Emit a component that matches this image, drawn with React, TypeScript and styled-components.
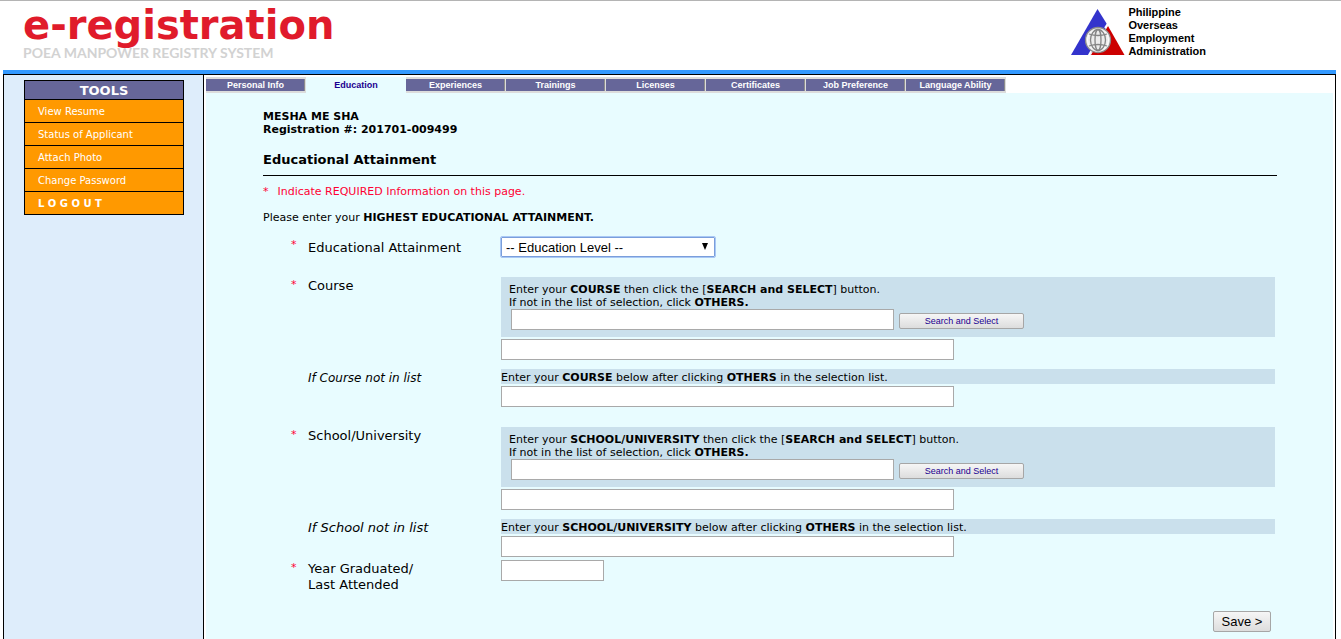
import React from "react";
import styled, { createGlobalStyle } from "styled-components";

const verdana = `Verdana, "DejaVu Sans", sans-serif`;
const arial = `"Liberation Sans", Arial, sans-serif`;

const GlobalStyle = createGlobalStyle`
  *, *::before, *::after { box-sizing: border-box; }
  body { margin: 0; background: #fff; color: #000; font: 11px/13px ${verdana}; }
`;

const Page = styled.div`
  display: flex;
  flex-direction: column;
  min-height: 100vh;
  padding: 0 5px 0 3px;
  border-top: 1px solid #b4b4b4;
`;

const Header = styled.header`
  display: flex;
  justify-content: space-between;
  align-items: flex-start;
  height: 69px;
  padding: 5px 130px 0 20px;
`;

const Brand = styled.div`
  display: flex;
  flex-direction: column;
`;

const BrandName = styled.h1`
  margin: 0;
  font: bold 40px/38px "DejaVu Sans", sans-serif;
  color: #e01b2b;
`;

const BrandTagline = styled.p`
  margin: 0;
  font: bold 14px/18px Lato, sans-serif;
  color: #d2d2d2;
`;

const Agency = styled.div`
  display: flex;
  align-items: center;
  gap: 3px;
`;

const AgencyName = styled.p`
  margin: 0;
  font: bold 11px/13px ${arial};
`;

const Frame = styled.div`
  display: flex;
  flex: 1;
  border-top: 4px solid #3399ff;
`;

const Sidebar = styled.aside`
  flex: none;
  width: 201px;
  padding: 5px 19px 0 20px;
  border: 1px solid #000;
  border-bottom: 0;
  background: #deedfb;
`;

const Tools = styled.nav`
  border: 1px solid #000;
  background: #ff9900;
`;

const ToolsTitle = styled.h2`
  margin: 0;
  padding-top: 2px;
  background: #666699;
  color: #fff;
  font-size: 13px;
  line-height: 16px;
  text-align: center;
`;

const ToolLink = styled.a<{ $strong?: boolean }>`
  display: block;
  padding: 2px 0 0 13px;
  border-top: 1px solid #000;
  color: #fff;
  font-size: 10px;
  font-weight: ${(p) => (p.$strong ? "bold" : "normal")};
  line-height: 20px;
  text-decoration: none;
`;

const Main = styled.main`
  display: flex;
  flex: 1;
  flex-direction: column;
  padding: 2px 2px 0;
  border: solid #000;
  border-width: 1px 1px 0 0;
`;

const Tabs = styled.nav`
  display: flex;
`;

const Tab = styled.a<{ $active?: boolean }>`
  width: 100px;
  height: 16px;
  padding: ${(p) => (p.$active ? "2px 0" : "0")};
  border: solid ${(p) => (p.$active ? "#e8fcff" : "#dcdcdc")};
  border-width: ${(p) => (p.$active ? "0" : "2px 1px 2px 0")};
  background: ${(p) => (p.$active ? "#e8fcff" : "#666699")};
  box-shadow: ${(p) => (p.$active ? "none" : "inset -1px 0 #8c8c8c")};
  color: ${(p) => (p.$active ? "#1a0090" : "#fff")};
  font: bold 9px/12px ${arial};
  text-align: center;
  text-decoration: none;
`;

const Content = styled.div`
  flex: 1;
  padding: 17px 56px 7px 57px;
  background: #e8fcff;
`;

const Applicant = styled.p`
  margin: 0 0 16px;
  font-weight: bold;
`;

const Heading = styled.h2`
  margin: 0 0 9px;
  padding-bottom: 7px;
  border-bottom: 1px solid #000;
  font-size: 13px;
  line-height: 16px;
`;

const RequiredNote = styled.p`
  display: flex;
  gap: 9px;
  margin: 0 0 13px;
  color: #ff0033;
`;

const Lead = styled.p`
  margin: 0 0 13px;
`;

const Row = styled.div<{ $gap?: number; $middle?: boolean }>`
  display: grid;
  grid-template-columns: 45px 193px 1fr;
  align-items: ${(p) => (p.$middle ? "center" : "start")};
  margin-bottom: ${(p) => p.$gap ?? 0}px;
  padding-right: 2px;
`;

const Star = styled.span`
  align-self: start;
  padding: 1px 0 0 28px;
  color: #ff0033;
`;

const Label = styled.label<{ $note?: boolean; $size?: number }>`
  grid-column: 2;
  padding-top: 1px;
  font-size: ${(p) => p.$size ?? 13}px;
  font-style: ${(p) => (p.$note ? "italic" : "normal")};
  line-height: 16px;
`;

const Field = styled.div`
  grid-column: 3;
  display: flex;
  flex-direction: column;
  align-items: flex-start;
  gap: 2px;
`;

const SelectBox = styled.div`
  position: relative;
  width: 214px;
`;

const Select = styled.select`
  appearance: none;
  display: block;
  width: 100%;
  height: 20px;
  padding: 1px 4px 0;
  border: 1px solid #7a9edb;
  border-radius: 1px;
  outline: 1px solid #a9c8f5;
  background: #fff;
  color: #000;
  font: 13px/17px ${arial};
`;

const Arrow = styled.svg`
  position: absolute;
  top: 6px;
  right: 6px;
  pointer-events: none;
`;

const TextInput = styled.input<{ $width: number }>`
  width: ${(p) => p.$width}px;
  height: 21px;
  padding: 0 2px;
  border: 1px solid #a9a9a9;
  border-radius: 0;
  background: #fff;
  font: 13px ${arial};
`;

const Panel = styled.div`
  width: 100%;
  padding: 6px 8px 7px;
  background: #cae0ec;
`;

const PanelText = styled.p`
  margin: 0;
`;

const SearchLine = styled.div`
  display: flex;
  align-items: flex-end;
  gap: 5px;
  padding-left: 2px;
`;

const Strip = styled.p`
  width: 100%;
  margin: 0;
  padding-top: 2px;
  background: #cae0ec;
`;

const Button = styled.button<{ $small?: boolean }>`
  width: ${(p) => (p.$small ? 125 : 58)}px;
  height: ${(p) => (p.$small ? 16 : 21)}px;
  margin-bottom: ${(p) => (p.$small ? 1 : 0)}px;
  padding: 0;
  border: 1px solid #a6a6a6;
  border-radius: 2px;
  background: linear-gradient(#f6f6f6, #dddddd);
  color: ${(p) => (p.$small ? "#1a0090" : "#000")};
  font: ${(p) => (p.$small ? "9px/12px" : "13px/18px")} ${arial};
`;

const Actions = styled.div`
  display: flex;
  justify-content: flex-end;
  margin-top: 18px;
  padding-right: 6px;
`;

const tools = ["View Resume", "Status of Applicant", "Attach Photo", "Change Password"];

const tabs = [
  "Personal Info",
  "Education",
  "Experiences",
  "Trainings",
  "Licenses",
  "Certificates",
  "Job Preference",
  "Language Ability",
];

function AgencyLogo() {
  return (
    <svg width="54" height="48" viewBox="0 0 54 48" aria-hidden="true">
      <path d="M26.500 1 L36.500 17 L19 47 H0 Z" fill="#3333cc" />
      <path d="M37 18 L53.500 47 H20 L24 40 Z" fill="#cc0000" />
      <path d="M38 14 L34 20 M22 40 L17.500 48" stroke="#fff" strokeWidth="2" />
      <circle cx="27" cy="32" r="12.500" fill="#ececec" stroke="#8a8a8a" strokeWidth="1.300" />
      <circle cx="27" cy="32" r="10.500" fill="none" stroke="#fff" strokeWidth="1" />
      <g fill="none" stroke="#858585" strokeWidth="1.300">
        <ellipse cx="27" cy="32" rx="7.500" ry="10.500" />
        <ellipse cx="27" cy="32" rx="3" ry="10.500" />
        <path d="M18 26 Q27 29 36 26 M18 38 Q27 35 36 38" />
      </g>
    </svg>
  );
}

interface LookupProps {
  id: string;
  label: string;
  subject: string;
  otherLabel: string;
  otherSize: number;
  otherGap: number;
}

function Lookup({ id, label, subject, otherLabel, otherSize, otherGap }: LookupProps) {
  return (
    <>
      <Row $gap={9}>
        <Star>*</Star>
        <Label htmlFor={id}>{label}</Label>
        <Field>
          <Panel>
            <PanelText>
              Enter your <b>{subject}</b> then click the [<b>SEARCH and SELECT</b>] button.
              <br />
              If not in the list of selection, click <b>OTHERS.</b>
            </PanelText>
            <SearchLine>
              <TextInput id={id} $width={383} />
              <Button type="button" $small>
                Search and Select
              </Button>
            </SearchLine>
          </Panel>
          <TextInput aria-label={`Selected ${label}`} $width={453} readOnly />
        </Field>
      </Row>
      <Row $gap={otherGap}>
        <Label htmlFor={`${id}-other`} $note $size={otherSize}>
          {otherLabel}
        </Label>
        <Field>
          <Strip>
            Enter your <b>{subject}</b> below after clicking <b>OTHERS</b> in the selection list.
          </Strip>
          <TextInput id={`${id}-other`} $width={453} />
        </Field>
      </Row>
    </>
  );
}

export default function App() {
  return (
    <>
      <GlobalStyle />
      <Page>
        <Header>
          <Brand>
            <BrandName>e-registration</BrandName>
            <BrandTagline>POEA MANPOWER REGISTRY SYSTEM</BrandTagline>
          </Brand>
          <Agency>
            <AgencyLogo />
            <AgencyName>
              Philippine
              <br />
              Overseas
              <br />
              Employment
              <br />
              Administration
            </AgencyName>
          </Agency>
        </Header>
        <Frame>
          <Sidebar>
            <Tools aria-label="Tools">
              <ToolsTitle>TOOLS</ToolsTitle>
              {tools.map((tool) => (
                <ToolLink key={tool} href="#">
                  {tool}
                </ToolLink>
              ))}
              <ToolLink href="#" $strong>
                L O G O U T
              </ToolLink>
            </Tools>
          </Sidebar>
          <Main>
            <Tabs aria-label="Sections">
              {tabs.map((tab) => (
                <Tab key={tab} href="#" $active={tab === "Education"}>
                  {tab}
                </Tab>
              ))}
            </Tabs>
            <Content>
              <Applicant>
                MESHA ME SHA
                <br />
                Registration #: 201701-009499
              </Applicant>
              <Heading>Educational Attainment</Heading>
              <RequiredNote>
                <span>*</span>
                <span>Indicate REQUIRED Information on this page.</span>
              </RequiredNote>
              <Lead>
                Please enter your <b>HIGHEST EDUCATIONAL ATTAINMENT.</b>
              </Lead>
              <form onSubmit={(e) => e.preventDefault()}>
                <Row $gap={20} $middle>
                  <Star>*</Star>
                  <Label htmlFor="level">Educational Attainment</Label>
                  <Field>
                    <SelectBox>
                      <Select id="level">
                        <option>-- Education Level --</option>
                      </Select>
                      <Arrow width="8" height="7" viewBox="0 0 8 7" aria-hidden="true">
                        <path d="M1 0 H7 L4 7 Z" fill="#000" />
                      </Arrow>
                    </SelectBox>
                  </Field>
                </Row>
                <Lookup
                  id="course"
                  label="Course"
                  subject="COURSE"
                  otherLabel="If Course not in list"
                  otherSize={12}
                  otherGap={20}
                />
                <Lookup
                  id="school"
                  label="School/University"
                  subject="SCHOOL/UNIVERSITY"
                  otherLabel="If School not in list"
                  otherSize={13}
                  otherGap={3}
                />
                <Row>
                  <Star>*</Star>
                  <Label htmlFor="year">
                    Year Graduated/
                    <br />
                    Last Attended
                  </Label>
                  <Field>
                    <TextInput id="year" $width={103} />
                  </Field>
                </Row>
                <Actions>
                  <Button type="submit">Save &gt;</Button>
                </Actions>
              </form>
            </Content>
          </Main>
        </Frame>
      </Page>
    </>
  );
}
